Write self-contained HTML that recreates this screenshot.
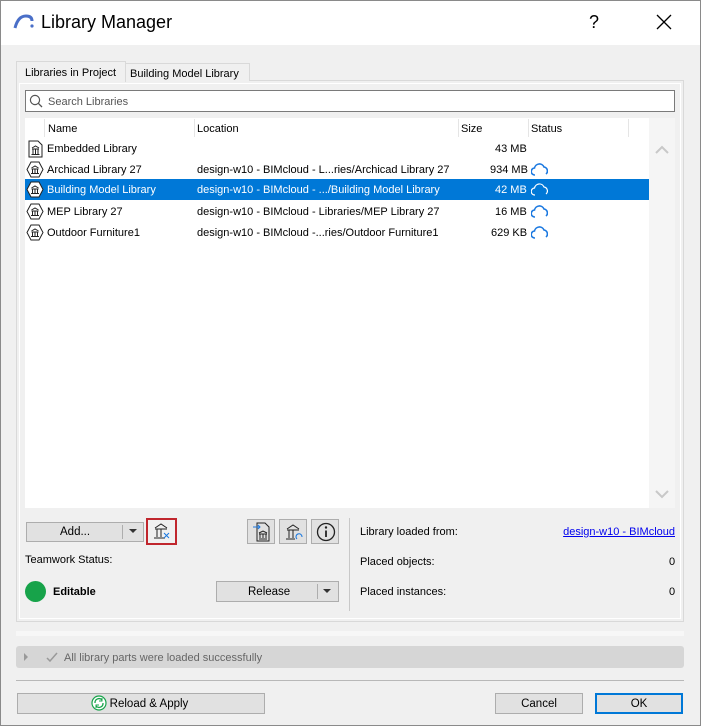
<!DOCTYPE html>
<html><head><style>
*{box-sizing:border-box;margin:0;padding:0}
body{width:701px;height:726px;font-family:"Liberation Sans",sans-serif;font-size:11px;color:#000;background:#f0f0f0;position:relative;overflow:hidden}
.a{position:absolute}
.win{left:0;top:0;width:701px;height:726px;border:1px solid #8a8a8a}
.btn{position:absolute;background:#e1e1e1;border:1px solid #adadad;text-align:center;line-height:19px;font-size:11.5px}
.row{position:absolute;left:25px;width:624px;height:21px;line-height:22px;font-size:11px}
.row span{position:absolute}
.ibtn{position:absolute;width:28px;height:25px;background:#e1e1e1;border:1px solid #adadad}
</style></head><body>
<div class="a win"></div>
<div class="a" style="left:1px;top:1px;width:699px;height:44px;background:#fff"></div>
<svg class="a" style="left:12px;top:13px" width="24" height="18"><path d="M3 15 Q6 3 14 3 Q20 3 20 8" fill="none" stroke="#4a6fc8" stroke-width="3"/><circle cx="20" cy="13" r="1.6" fill="#4a6fc8"/></svg>
<div class="a" style="left:41px;top:12px;font-size:18px">Library Manager</div>
<div class="a" style="left:589px;top:12px;font-size:18px">?</div>
<svg class="a" style="left:656px;top:14px" width="16" height="16"><path d="M1 1L15 15M15 1L1 15" stroke="#000" stroke-width="1.3"/></svg>
<div class="a" style="left:16px;top:80px;width:668px;height:542px;border:1px solid #d9d9d9;background:#f0f0f0"></div>
<div class="a" style="left:19px;top:83px;width:662px;height:536px;border:1px solid #fff"></div>
<div class="a" style="left:16px;top:61px;width:110px;height:21px;border:1px solid #d9d9d9;border-bottom:none;background:#f0f0f0;padding:5px 0 0 8px">Libraries in Project</div>
<div class="a" style="left:125px;top:63px;width:125px;height:18px;border:1px solid #d9d9d9;border-bottom:none;background:#f0f0f0;padding:4px 0 0 4px">Building Model Library</div>
<div class="a" style="left:25px;top:90px;width:650px;height:22px;border:1px solid #7a7a7a;background:#fff"></div>
<svg class="a" style="left:29px;top:94px" width="14" height="14"><circle cx="6" cy="6" r="4.6" fill="none" stroke="#555" stroke-width="1.2"/><path d="M9.3 9.3L13 13" stroke="#555" stroke-width="1.3"/></svg>
<div class="a" style="left:48px;top:96px;color:#555">Search Libraries</div>
<div class="a" style="left:25px;top:118px;width:624px;height:390px;background:#fff"></div>
<div class="a" style="left:649px;top:118px;width:26px;height:390px;background:#f5f5f5"></div>
<div class="a" style="left:44px;top:119px;width:1px;height:18px;background:#e5e5e5"></div>
<div class="a" style="left:194px;top:119px;width:1px;height:18px;background:#e5e5e5"></div>
<div class="a" style="left:458px;top:119px;width:1px;height:18px;background:#e5e5e5"></div>
<div class="a" style="left:528px;top:119px;width:1px;height:18px;background:#e5e5e5"></div>
<div class="a" style="left:628px;top:119px;width:1px;height:18px;background:#e5e5e5"></div>
<div class="a" style="left:48px;top:123px">Name</div>
<div class="a" style="left:197px;top:123px">Location</div>
<div class="a" style="left:461px;top:123px">Size</div>
<div class="a" style="left:531px;top:123px">Status</div>
<svg class="a" style="left:655px;top:145px" width="14" height="10"><path d="M1 8L7 2L13 8" fill="none" stroke="#c8c8c8" stroke-width="2"/></svg>
<svg class="a" style="left:655px;top:489px" width="14" height="10"><path d="M1 2L7 8L13 2" fill="none" stroke="#c8c8c8" stroke-width="2"/></svg>

<div class="row" style="top:138px"><svg style="position:absolute;left:3px;top:2px" width="15" height="18"><path d="M1 1H10L14 5V17H1Z" fill="#fff" stroke="#222"/><path d="M4 8L7.5 6L11 8M4 9H11M5 9V14M7.5 9V14M10 9V14M3.5 14.5H11.5" stroke="#222" fill="none"/></svg><span style="left:22px">Embedded Library</span><span style="left:470px">43 MB</span></div>
<div class="row" style="top:159px"><svg style="position:absolute;left:1px;top:2px" width="18" height="17"><path d="M5 1H13L17 8.5L13 16H5L1 8.5Z" fill="#fff" stroke="#222"/><path d="M5.5 7L9 5L12.5 7M5.5 8H12.5M6.5 8V12M9 8V12M11.5 8V12M5 12.5H13" stroke="#222" fill="none"/></svg><span style="left:22px">Archicad Library 27</span><span style="left:172px">design-w10 - BIMcloud - L...ries/Archicad Library 27</span><span style="left:465px">934 MB</span><svg style="position:absolute;left:506px;top:4px" width="17" height="13"><path d="M4 12A3.5 3.5 0 0 1 3.5 5 A5 5 0 0 1 13 4 A4 4 0 0 1 15 11" fill="none" stroke="#1a78e0" stroke-width="1.6"/></svg></div>
<div class="row" style="top:179px;background:#0078d7;color:#fff"><svg style="position:absolute;left:1px;top:2px" width="18" height="17"><path d="M5 1H13L17 8.5L13 16H5L1 8.5Z" fill="#fff" stroke="#222"/><path d="M5.5 7L9 5L12.5 7M5.5 8H12.5M6.5 8V12M9 8V12M11.5 8V12M5 12.5H13" stroke="#222" fill="none"/></svg><span style="left:22px">Building Model Library</span><span style="left:172px">design-w10 - BIMcloud - .../Building Model Library</span><span style="left:470px">42 MB</span><svg style="position:absolute;left:506px;top:4px" width="17" height="13"><path d="M4 12A3.5 3.5 0 0 1 3.5 5 A5 5 0 0 1 13 4 A4 4 0 0 1 15 11" fill="none" stroke="#fff" stroke-width="1.2"/></svg></div>
<div class="row" style="top:201px"><svg style="position:absolute;left:1px;top:2px" width="18" height="17"><path d="M5 1H13L17 8.5L13 16H5L1 8.5Z" fill="#fff" stroke="#222"/><path d="M5.5 7L9 5L12.5 7M5.5 8H12.5M6.5 8V12M9 8V12M11.5 8V12M5 12.5H13" stroke="#222" fill="none"/></svg><span style="left:22px">MEP Library 27</span><span style="left:172px">design-w10 - BIMcloud - Libraries/MEP Library 27</span><span style="left:470px">16 MB</span><svg style="position:absolute;left:506px;top:4px" width="17" height="13"><path d="M4 12A3.5 3.5 0 0 1 3.5 5 A5 5 0 0 1 13 4 A4 4 0 0 1 15 11" fill="none" stroke="#1a78e0" stroke-width="1.6"/></svg></div>
<div class="row" style="top:222px"><svg style="position:absolute;left:1px;top:2px" width="18" height="17"><path d="M5 1H13L17 8.5L13 16H5L1 8.5Z" fill="#fff" stroke="#222"/><path d="M5.5 7L9 5L12.5 7M5.5 8H12.5M6.5 8V12M9 8V12M11.5 8V12M5 12.5H13" stroke="#222" fill="none"/></svg><span style="left:22px">Outdoor Furniture1</span><span style="left:172px">design-w10 - BIMcloud -...ries/Outdoor Furniture1</span><span style="left:466px">629 KB</span><svg style="position:absolute;left:506px;top:4px" width="17" height="13"><path d="M4 12A3.5 3.5 0 0 1 3.5 5 A5 5 0 0 1 13 4 A4 4 0 0 1 15 11" fill="none" stroke="#1a78e0" stroke-width="1.6"/></svg></div>

<div class="btn" style="left:26px;top:522px;width:118px;height:20px;text-align:left;padding-left:33px">Add...</div>
<div class="a" style="left:122px;top:525px;width:1px;height:14px;background:#adadad"></div>
<svg class="a" style="left:129px;top:529px" width="8" height="5"><path d="M0 0H8L4 4Z" fill="#333"/></svg>
<div class="a" style="left:146px;top:518px;width:31px;height:27px;border:2px solid #c0262d"></div>
<svg class="a" style="left:153px;top:522px" width="17" height="18"><path d="M2 6L8 2L14 6M2 7H14M4 7V15M8 7V15M1 16H12" stroke="#222" fill="none"/><path d="M11 11L16 16M16 11L11 16" stroke="#1a78e0"/></svg>
<div class="ibtn" style="left:247px;top:519px"><svg style="position:absolute;left:5px;top:2px" width="17" height="20"><path d="M4 1H12L16 5V19H4Z" fill="none" stroke="#222"/><path d="M0 5H7M5 3L7 5L5 7" stroke="#1a78e0" fill="none"/><path d="M6 11L10 9L14 11M6 12H14M7 12V16M10 12V16M13 12V16M6 17H14" stroke="#222" fill="none"/></svg></div>
<div class="ibtn" style="left:279px;top:519px"><svg style="position:absolute;left:5px;top:3px" width="18" height="18"><path d="M2 6L8 2L14 6M2 7H14M4 7V15M8 7V15M1 16H10" stroke="#222" fill="none"/><path d="M12 16A3 3 0 1 1 17 14" stroke="#1a78e0" fill="none"/></svg></div>
<div class="ibtn" style="left:311px;top:519px"><svg style="position:absolute;left:4px;top:2px" width="20" height="20"><circle cx="10" cy="10" r="8.5" fill="none" stroke="#222" stroke-width="1.3"/><path d="M10 8.5V15" stroke="#222" stroke-width="1.8"/><circle cx="10" cy="5.5" r="1.2" fill="#222"/></svg></div>
<div class="a" style="left:25px;top:554px;font-size:11px">Teamwork Status:</div>
<div class="a" style="left:25px;top:581px;width:21px;height:21px;border-radius:50%;background:#17a34a"></div>
<div class="a" style="left:53px;top:586px;font-weight:bold">Editable</div>
<div class="btn" style="left:216px;top:581px;width:123px;height:21px;line-height:20px;text-align:left;padding-left:31px">Release</div>
<div class="a" style="left:317px;top:584px;width:1px;height:15px;background:#adadad"></div>
<svg class="a" style="left:323px;top:589px" width="8" height="5"><path d="M0 0H8L4 4Z" fill="#333"/></svg>
<div class="a" style="left:349px;top:518px;width:1px;height:93px;background:#c8c8c8"></div>
<div class="a" style="left:360px;top:526px">Library loaded from:</div>
<div class="a" style="left:500px;width:175px;text-align:right;top:526px;color:#0000ee;text-decoration:underline">design-w10 - BIMcloud</div>
<div class="a" style="left:360px;top:556px">Placed objects:</div>
<div class="a" style="left:669px;top:556px">0</div>
<div class="a" style="left:360px;top:586px">Placed instances:</div>
<div class="a" style="left:669px;top:586px">0</div>
<div class="a" style="left:16px;top:631px;width:668px;height:5px;background:#f7f7f7"></div>
<div class="a" style="left:16px;top:646px;width:668px;height:22px;background:#d6d6d6;border-radius:3px"></div>
<svg class="a" style="left:24px;top:653px" width="5" height="8"><path d="M0 0L4 4L0 8Z" fill="#999"/></svg>
<svg class="a" style="left:46px;top:652px" width="12" height="10"><path d="M1 6L4 9L11 1" fill="none" stroke="#999" stroke-width="1.5"/></svg>
<div class="a" style="left:64px;top:652px;color:#666">All library parts were loaded successfully</div>
<div class="a" style="left:16px;top:680px;width:668px;height:1px;background:#b8b8b8"></div>
<div class="btn" style="left:17px;top:693px;width:248px;height:21px;line-height:20px">&nbsp;&nbsp;&nbsp;&nbsp;&nbsp;Reload &amp; Apply</div>
<svg class="a" style="left:91px;top:695px" width="16" height="16"><circle cx="8" cy="8" r="7" fill="#fff" stroke="#17a34a" stroke-width="1.2"/><path d="M4 8A4 4 0 0 1 11 5M12 8A4 4 0 0 1 5 11" fill="none" stroke="#17a34a" stroke-width="1.3"/><path d="M11 3V6H8M5 13V10H8" fill="none" stroke="#17a34a"/></svg>
<div class="btn" style="left:495px;top:693px;width:88px;height:21px;line-height:20px">Cancel</div>
<div class="btn" style="left:595px;top:693px;width:88px;height:21px;line-height:18px;border:2px solid #0078d7">OK</div>
</body></html>
